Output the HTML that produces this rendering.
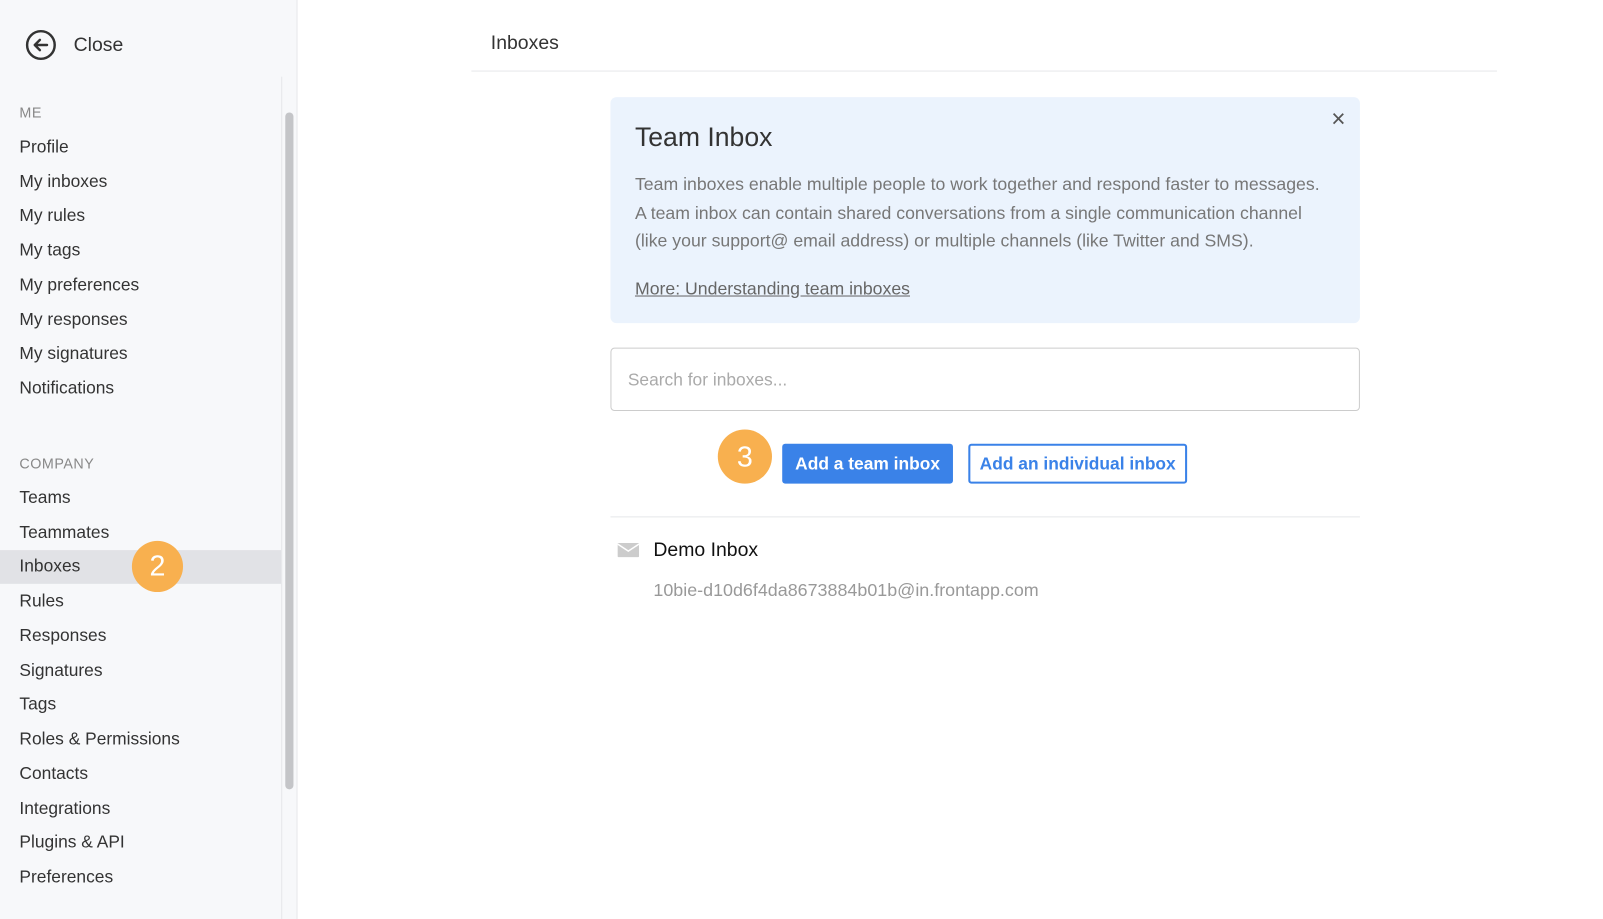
<!DOCTYPE html>
<html><head><style>
body{margin:0;width:1603px;height:899px;overflow:hidden;background:#fff;font-family:"Liberation Sans",sans-serif}
#w{position:absolute;left:0;top:0;width:1570px;height:880px;transform:scale(1.0225);transform-origin:0 0}
.sb{position:absolute;left:0;top:0;width:290px;height:899px;background:#f7f8fa;border-right:1px solid #e6e7ea}
.sb .inner{position:absolute;left:275px;top:75px;width:1px;height:824px;background:#e6e7ea}
.sb .bar{position:absolute;left:279px;top:110px;width:8px;height:662px;background:#c4c5c8;border-radius:4px}
.t{position:absolute;left:19px;font-size:17px;color:#333}
.h{position:absolute;left:19px;font-size:14px;color:#888;letter-spacing:.5px}
.sel{position:absolute;left:0;top:538px;width:275px;height:33px;background:#e1e2e6}
.badge{position:absolute;border-radius:50%;background:#f8b04f;color:#fff;text-align:center;font-size:28px}
</style></head><body><div id="w">
<div class="sb">
<div class="sel"></div>
<div class="inner"></div><div class="bar"></div>
<svg style="position:absolute;left:25px;top:29px" width="30" height="30" viewBox="0 0 30 30"><circle cx="15" cy="15" r="13.5" fill="none" stroke="#333" stroke-width="2.4"/><path d="M21 15H9M14 10l-5 5 5 5" fill="none" stroke="#333" stroke-width="2.4" stroke-linecap="round" stroke-linejoin="round"/></svg>
<div class="t" style="left:72px;top:34px;font-size:19px">Close</div>
<div class="h" style="top:102px">ME</div>
<div class="t" style="top:134px">Profile</div>
<div class="t" style="top:168px">My inboxes</div>
<div class="t" style="top:201px">My rules</div>
<div class="t" style="top:235px">My tags</div>
<div class="t" style="top:269px">My preferences</div>
<div class="t" style="top:303px">My responses</div>
<div class="t" style="top:336px">My signatures</div>
<div class="t" style="top:370px">Notifications</div>
<div class="h" style="top:445px">COMPANY</div>
<div class="t" style="top:477px">Teams</div>
<div class="t" style="top:511px">Teammates</div>
<div class="t" style="top:544px">Inboxes</div>
<div class="t" style="top:578px">Rules</div>
<div class="t" style="top:612px">Responses</div>
<div class="t" style="top:646px">Signatures</div>
<div class="t" style="top:679px">Tags</div>
<div class="t" style="top:713px">Roles &amp; Permissions</div>
<div class="t" style="top:747px">Contacts</div>
<div class="t" style="top:781px">Integrations</div>
<div class="t" style="top:814px">Plugins &amp; API</div>
<div class="t" style="top:848px">Preferences</div>
<div class="badge" style="left:129px;top:529px;width:50px;height:50px;line-height:50px">2</div>
</div>
<div style="position:absolute;left:480px;top:32px;font-size:19px;color:#333">Inboxes</div>
<div style="position:absolute;left:461px;top:69px;width:1003px;height:1px;background:#e6e7ea"></div>
<div style="position:absolute;left:597px;top:95px;width:733px;height:221px;background:#ebf3fd;border-radius:6px">
<div style="position:absolute;left:24px;top:24px;font-size:26px;color:#333">Team Inbox</div>
<div style="position:absolute;right:14px;top:8px;font-size:24px;color:#555">×</div>
<div style="position:absolute;left:24px;top:72px;width:700px;font-size:17.3px;line-height:27.5px;color:#777;white-space:nowrap">Team inboxes enable multiple people to work together and respond faster to messages.<br>A team inbox can contain shared conversations from a single communication channel<br>(like your support@ email address) or multiple channels (like Twitter and SMS).</div>
<div style="position:absolute;left:24px;top:177px;font-size:17.3px;color:#666;text-decoration:underline">More: Understanding team inboxes</div>
</div>
<div style="position:absolute;left:597px;top:340px;width:731px;height:60px;border:1px solid #ccc;border-radius:4px">
<div style="position:absolute;left:16px;top:21px;font-size:17px;color:#aaa">Search for inboxes...</div></div>
<div class="badge" style="left:702px;top:420px;width:53px;height:53px;line-height:53px">3</div>
<div style="position:absolute;left:765px;top:434px;width:167px;height:39px;background:#3a82e8;border-radius:3px;color:#fff;font-size:17px;font-weight:bold;line-height:39px;text-align:center">Add a team inbox</div>
<div style="position:absolute;left:947px;top:434px;width:210px;height:35px;border:2px solid #3a82e8;border-radius:3px;color:#3a82e8;font-size:17px;font-weight:bold;line-height:35px;text-align:center">Add an individual inbox</div>
<div style="position:absolute;left:597px;top:505px;width:733px;height:1px;background:#e6e7ea"></div>
<svg style="position:absolute;left:604px;top:531px" width="21" height="14" viewBox="0 0 21 14"><rect width="21" height="14" fill="#ccc" rx="1"/><path d="M0 1l10.5 7L21 1" fill="none" stroke="#fff" stroke-width="1.5"/></svg>
<div style="position:absolute;left:639px;top:528px;font-size:19px;color:#111">Demo Inbox</div>
<div style="position:absolute;left:639px;top:567px;font-size:17.5px;color:#999">10bie-d10d6f4da8673884b01b@in.frontapp.com</div>
</div></body></html>
